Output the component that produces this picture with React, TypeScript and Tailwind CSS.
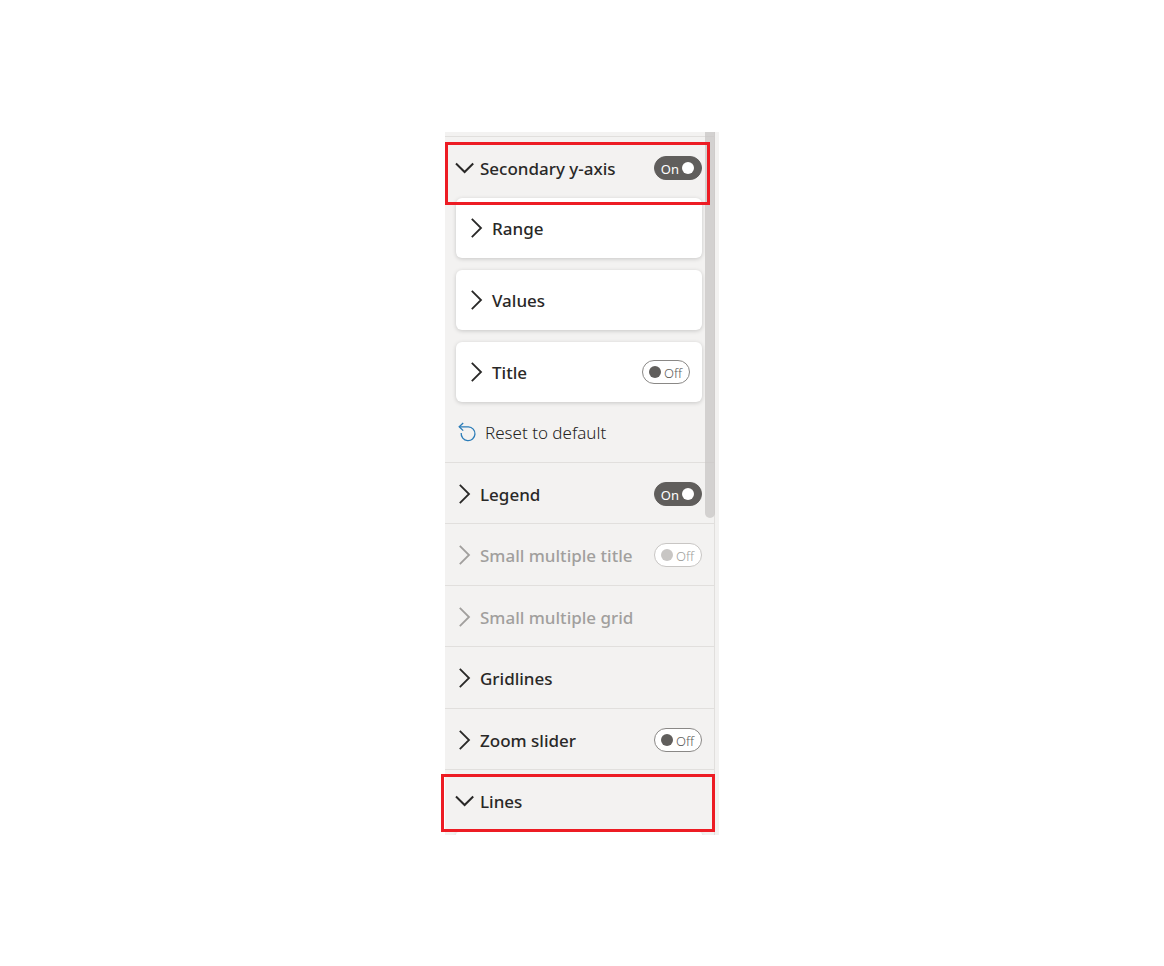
import { useState } from "react";
import clsx from "clsx";

function Chevron({ open }: { open?: boolean }) {
  return (
    <svg
      viewBox="0 0 20 20"
      className="size-5 shrink-0"
      fill="none"
      stroke="currentColor"
      strokeWidth={open ? 2 : 1.8}
      aria-hidden="true"
    >
      {open ? <path d="M2 5.5 L10.6 14 L19.2 5.5" /> : <path d="M5.8 0.8 L15 10 L5.8 19.2" />}
    </svg>
  );
}

function Toggle({ label, initial, disabled }: { label: string; initial: boolean; disabled?: boolean }) {
  const [on, setOn] = useState(initial);
  return (
    <button
      type="button"
      role="switch"
      aria-checked={on}
      aria-label={label}
      disabled={disabled}
      onClick={() => setOn(!on)}
      className={clsx(
        "flex h-6 w-12 shrink-0 items-center gap-[3px] rounded-full border text-[13px] leading-4",
        on ? "flex-row-reverse justify-start pr-[7px]" : "pl-1.5",
        on && "border-[#605e5c] bg-[#605e5c] text-white",
        !on && !disabled && "border-[#8a8886] bg-white text-[#605e5c]",
        disabled && "border-[#c8c6c4] bg-white text-[#a19f9d]",
      )}
    >
      <span
        className={clsx(
          "size-3 shrink-0 rounded-full",
          on ? "bg-white" : disabled ? "bg-[#c8c6c4]" : "bg-[#605e5c]",
        )}
      />
      <span className={clsx("pt-0.5", !on && "font-light")}>{on ? "On" : "Off"}</span>
    </button>
  );
}

type HeaderProps = { label: string; open?: boolean; toggle?: boolean; disabled?: boolean };

function Header({ label, open, toggle, disabled }: HeaderProps) {
  return (
    <div className="flex h-full items-center justify-between">
      <button
        type="button"
        aria-expanded={!!open}
        disabled={disabled}
        className={clsx(
          "flex items-center gap-1.5 text-[17px] leading-6 font-medium whitespace-nowrap",
          disabled ? "text-[#a19f9d]" : "text-[#292827]",
        )}
      >
        <Chevron open={open} />
        <span className="pt-0.5">{label}</span>
      </button>
      {toggle !== undefined && <Toggle label={label} initial={toggle} disabled={disabled} />}
    </div>
  );
}

function Card({ label, toggle }: HeaderProps) {
  return (
    <div className="h-[60px] rounded-md bg-white pr-3 pl-2.5 shadow-[0_1px_4px_rgba(0,0,0,0.18)]">
      <Header label={label} toggle={toggle} />
    </div>
  );
}

const sections: HeaderProps[] = [
  { label: "Legend", toggle: true },
  { label: "Small multiple title", toggle: false, disabled: true },
  { label: "Small multiple grid", disabled: true },
  { label: "Gridlines" },
  { label: "Zoom slider", toggle: false },
];

export default function App() {
  return (
    <main className="flex min-h-screen items-center justify-center bg-white font-['Noto_Sans',sans-serif]">
      <div className="relative w-full max-w-[274px]">
        <div className="overflow-hidden bg-[#f3f2f1] pr-1">
          <div className="border-r border-[#e1dfdd]">
            <div className="h-[5px] border-b border-[#e1dfdd]" />
            <section className="border-b border-[#e1dfdd] pr-3 pl-[11px]">
              <div className="-ml-0.5 h-[61px] pt-0.5">
                <Header label="Secondary y-axis" open toggle={true} />
              </div>
              <div className="flex flex-col gap-3">
                <Card label="Range" />
                <Card label="Values" />
                <Card label="Title" toggle={false} />
              </div>
              <div className="flex h-[60px] items-center">
                <button
                  type="button"
                  className="flex items-center gap-[7px] pl-0.5 text-[17px] leading-6 font-light whitespace-nowrap text-[#252423]"
                >
                  <svg
                    viewBox="0 0 20 20"
                    className="size-5"
                    fill="none"
                    stroke="#2b7cb8"
                    strokeWidth="1.3"
                    aria-hidden="true"
                  >
                    <path d="M5.2 1 L1.2 4.8 L5.2 8.6" />
                    <path d="M1.4 4.8 H10.4 A6.9 6.9 0 1 1 3.2 11" />
                  </svg>
                  <span className="pt-0.5">Reset to default</span>
                </button>
              </div>
            </section>
            {sections.map((s) => (
              <div key={s.label} className="h-[61px] border-b border-[#e1dfdd] pt-0.5 pr-3 pl-[9px] even:h-[62px]">
                <Header {...s} />
              </div>
            ))}
            <section className="pr-3 pl-[9px]">
              <div className="h-[62px]">
                <Header label="Lines" open />
              </div>
              <div className="ml-0.5 h-[3px] rounded-t-md bg-white shadow-[0_1px_4px_rgba(0,0,0,0.18)]" />
            </section>
          </div>
        </div>
        <div className="absolute top-0 right-1 h-[386px] w-2.5 rounded-b-full bg-[#c8c6c4]/75" />
        <div className="pointer-events-none absolute top-2.5 right-[9px] left-0 h-[63px] border-3 border-[#ed1c24]" />
        <div className="pointer-events-none absolute right-1 bottom-[3px] -left-1 h-[58px] border-3 border-[#ed1c24]" />
      </div>
    </main>
  );
}
